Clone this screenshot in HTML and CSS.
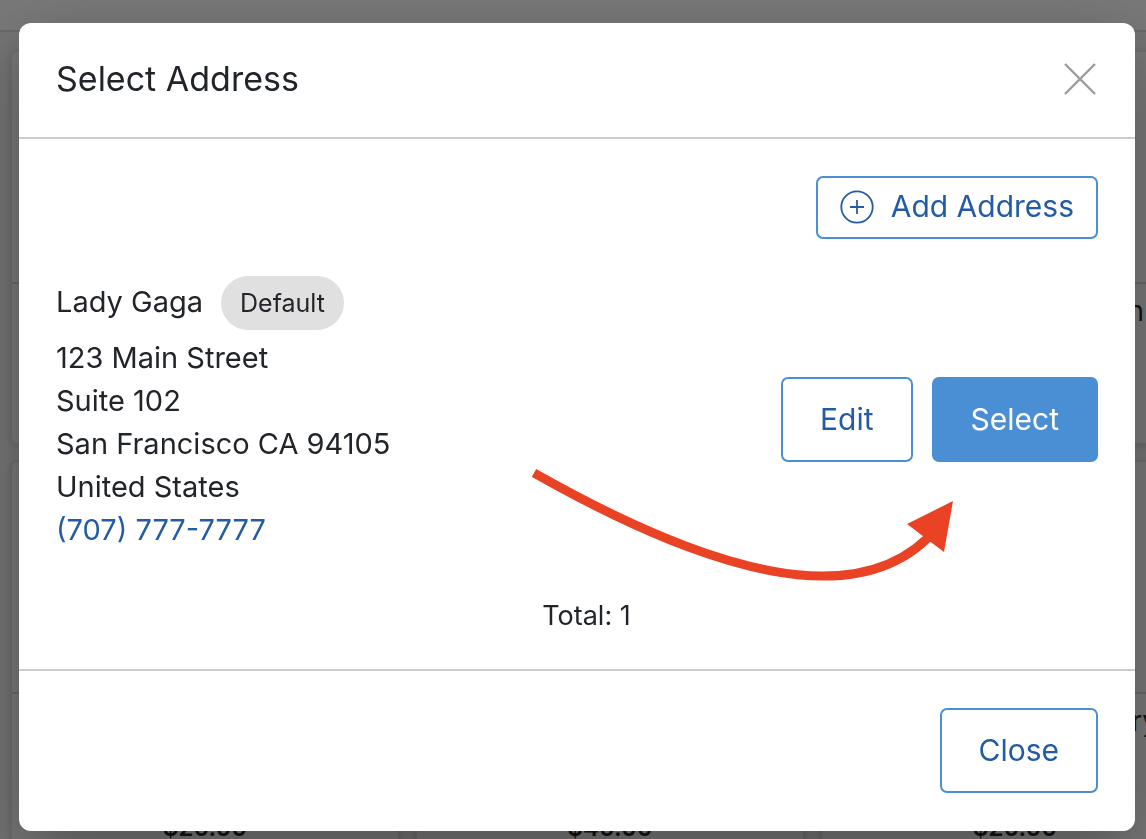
FILE: index.html
```html
<!DOCTYPE html>
<html lang="en">
<head>
<meta charset="utf-8">
<meta name="viewport" content="width=device-width, initial-scale=1">
<title>Select Address</title>
<link rel="stylesheet" href="styles.css">
</head>
<body>
<div class="page" aria-hidden="true">
  <div class="page-bar"></div>
  <div class="catalog">
    <article class="card"><div class="card-image"></div><div class="card-body"></div></article>
    <article class="card"><div class="card-image"></div><div class="card-body"></div></article>
    <article class="card"><div class="card-image"></div><div class="card-body"><p class="card-name">n</p></div></article>
    <article class="card"><div class="card-image"></div><div class="card-body"><p class="card-price">$20.00</p></div></article>
    <article class="card"><div class="card-image"></div><div class="card-body"><p class="card-price">$40.00</p></div></article>
    <article class="card"><div class="card-image"></div><div class="card-body"><p class="card-name card-name-long">ry</p><p class="card-price">$20.00</p></div></article>
  </div>
</div>
<div class="overlay">
  <section class="dialog" role="dialog" aria-modal="true" aria-labelledby="dialog-title">
    <header class="dialog-header">
      <h1 class="dialog-title" id="dialog-title">Select Address</h1>
      <button class="dismiss" type="button" aria-label="Dismiss">
        <svg class="dismiss-icon" viewBox="0 0 36 36"><path d="M3 2L33 32M33 2L3 32"/></svg>
      </button>
    </header>
    <div class="dialog-body">
      <div class="toolbar">
        <button class="button button-compact" type="button">
          <svg class="plus-icon" viewBox="0 0 34 34"><circle cx="17" cy="17" r="15.7"/><path d="M17 10v14M10 17h14"/></svg>
          Add Address
        </button>
      </div>
      <div class="entry">
        <address class="address">
          <div class="name-row"><span>Lady Gaga</span><span class="badge">Default</span></div>
          <div>123 Main Street</div>
          <div>Suite 102</div>
          <div>San Francisco CA 94105</div>
          <div>United States</div>
          <div><a class="phone" href="tel:+17077777777">(707) 777-7777</a></div>
        </address>
        <div class="actions">
          <button class="button" type="button">Edit</button>
          <button class="button button-primary" type="button">Select</button>
        </div>
        <svg class="arrow" viewBox="0 0 424 114" aria-hidden="true">
          <path class="arrow-line" d="M2 5C170 100 328 152 405 60"/>
          <path class="arrow-head" d="M421 33L375 56L412 84Z"/>
        </svg>
      </div>
      <p class="total">Total: 1</p>
    </div>
    <footer class="dialog-footer">
      <button class="button" type="button">Close</button>
    </footer>
  </section>
</div>
</body>
</html>
```

FILE: styles.css
```css
* {
  box-sizing: border-box;
}

body {
  margin: 0;
  height: 100vh;
  overflow: hidden;
  font-family: Inter, "Liberation Sans", sans-serif;
  font-size: 29px;
  line-height: 43px;
  color: #212529;
}

p,
h1 {
  margin: 0;
}

.page {
  height: 100vh;
  overflow: hidden;
  background: #e8e8e8;
}

.page-bar {
  height: 32px;
  background: #f0f0f0;
  border-bottom: 2px solid #d4d4d4;
}

.catalog {
  display: grid;
  grid-template-columns: repeat(3, 388px);
  gap: 17px;
  padding: 19px 11px;
}

.card {
  height: 393px;
  border: 1px solid #d8d8d8;
  border-radius: 6px;
  background: #f0f0f0;
  box-shadow: 0 1px 6px rgba(0, 0, 0, 0.15);
  font-size: 24px;
  font-weight: 600;
}

.card-image {
  height: 232px;
  border-bottom: 2px solid #d0d0d0;
}

.card-body {
  display: flex;
  flex-direction: column;
  justify-content: flex-end;
  height: 159px;
  padding-bottom: 4px;
  text-align: center;
}

.card-name {
  margin-bottom: auto;
  padding: 6px 64px;
  font-size: 28px;
  font-weight: 400;
  text-align: right;
}

.card-name-long {
  padding: 6px 50px;
}

.overlay {
  position: fixed;
  inset: 0;
  padding: 23px 11px 8px 19px;
  background: rgba(0, 0, 0, 0.5);
}

.dialog {
  display: flex;
  flex-direction: column;
  border-radius: 12px;
  background: #fff;
  box-shadow: 0 24px 64px rgba(0, 0, 0, 0.3);
}

.dialog-header {
  display: flex;
  align-items: center;
  justify-content: space-between;
  padding: 35px 37px 37px;
  border-bottom: 2px solid #ccc;
}

.dialog-title {
  font-size: 34px;
  font-weight: 400;
  line-height: 42px;
}

.dismiss {
  display: flex;
  padding: 0;
  border: 0;
  background: none;
}

.dismiss-icon {
  width: 36px;
  height: 36px;
  fill: none;
  stroke: #999b9d;
  stroke-width: 2.4;
}

.dismiss-icon path {
  transform: translateY(1px);
}

.dialog-body {
  padding: 37px 37px 32px;
}

.toolbar,
.dialog-footer {
  display: flex;
  justify-content: flex-end;
}

.button {
  display: flex;
  align-items: center;
  gap: 19px;
  padding: 19px 37px;
  border: 2px solid #4a8fd3;
  border-radius: 7px;
  background: #fff;
  color: #235ca4;
  font: inherit;
  font-size: 30px;
}

.button-compact {
  padding: 7px 22px 9px;
  gap: 17px;
}

.button-primary {
  background: #4a8fd3;
  color: #fff;
}

.plus-icon {
  width: 34px;
  height: 34px;
  fill: none;
  stroke: #235ca4;
  stroke-width: 1.8;
}

.entry {
  position: relative;
  display: flex;
  align-items: center;
  justify-content: space-between;
  margin-top: 37px;
}

.address {
  font-style: normal;
}

.name-row {
  display: flex;
  align-items: flex-start;
  gap: 18px;
  margin-bottom: 6px;
  line-height: 52px;
}

.badge {
  padding: 6px 19px;
  border-radius: 27px;
  background: #e0e0e0;
  font-size: 25px;
  line-height: 42px;
}

.phone {
  color: #235ca4;
  text-decoration: none;
}

.actions {
  display: flex;
  gap: 19px;
  padding-top: 12px;
}

.arrow {
  position: absolute;
  top: 192px;
  right: 142px;
  width: 424px;
  height: 114px;
  pointer-events: none;
}

.arrow-line {
  fill: none;
  stroke: #e94225;
  stroke-width: 9;
}

.arrow-head {
  fill: #e94225;
}

.total {
  padding-left: 19px;
  margin-top: 43px;
  font-size: 27px;
  text-align: center;
}

.dialog-footer {
  padding: 37px 37px 38px;
  border-top: 2px solid #ccc;
}
```
